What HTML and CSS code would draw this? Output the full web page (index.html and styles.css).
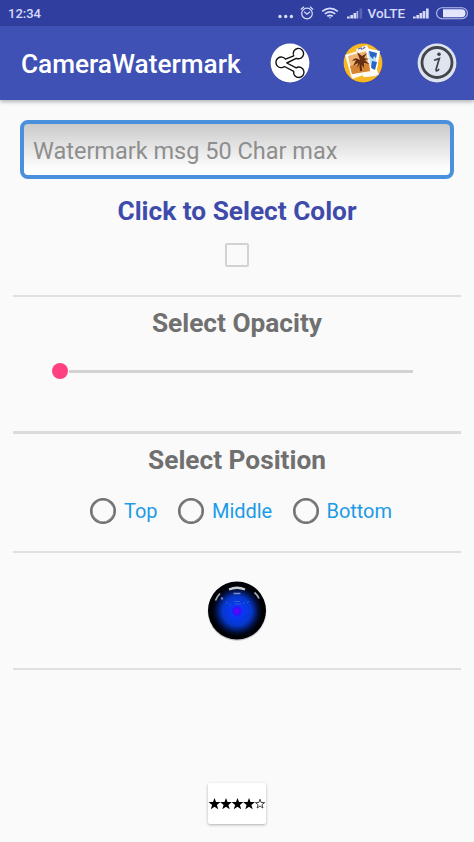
FILE: index.html
```html
<!DOCTYPE html>
<html lang="en">
<head>
<meta charset="utf-8">
<title>CameraWatermark</title>
<link rel="stylesheet" href="styles.css">
</head>
<body>
<div class="status">
  <span class="clock">12:34</span>
  <svg class="dots" width="16" height="26" viewBox="0 0 16 26"><g fill="#d5dafa"><circle cx="2" cy="16.5" r="1.7"/><circle cx="7.7" cy="16.5" r="1.7"/><circle cx="13.4" cy="16.5" r="1.7"/></g></svg>
  <svg class="alarm" width="14" height="26" viewBox="0 0 14 26" fill="none" stroke="#d5dafa" stroke-width="1.2"><circle cx="7" cy="13.5" r="5.3"/><path d="M.8 9.5 4 6.8M13.2 9.5 10 6.8M4.2 11.8 7 14.2l3-2.4"/></svg>
  <svg class="wifi" width="18" height="26" viewBox="0 0 18 26" fill="none" stroke="#d5dafa" stroke-width="1.7"><path d="M1.200 11.300q7.800-6 15.600 0M3.800 13.900q5.200-4 10.400 0M6.300 16.300q2.700-2 5.400 0"/><circle cx="9" cy="17.800" r=".8" fill="#d5dafa" stroke="none"/></svg>
  <svg class="signal" width="16" height="26" viewBox="0 0 16 26" fill="#d5dafa"><path d="M0 16.500h2.700v2H0zM3.300 15H6v3.500H3.300zM6.500 13h2.700v5.500H6.500z"/><path opacity=".75" d="M9.500 11h1.700v7.500H9.500z"/><path opacity=".25" d="M12.500 8.500h2.700v10h-2.700z"/></svg>
  <span class="volte">VoLTE</span>
  <svg class="signal2" width="16" height="26" viewBox="0 0 16 26" fill="#d5dafa"><path d="M0 16.500h2.700v2H0zM3.300 15H6v3.500H3.300zM6.500 13h2.700v5.500H6.500zM9.700 11h2.700v7.500H9.700zM13 8.500h2.700v10H13z"/></svg>
  <svg class="battery" width="32" height="26" viewBox="0 0 32 26"><rect x=".6" y="7.800" width="30.800" height="11" rx="5.500" fill="none" stroke="#b9c1ef" stroke-width="1.100"/><path fill="#e3e6fb" d="M7 9.300h18.500a4 4 0 0 1 0 8H7z"/></svg>
</div>
<header class="appbar">
  <h1>CameraWatermark</h1>
  <svg class="action" viewBox="0 0 40 40"><circle cx="20" cy="20.800" r="19.300" fill="#2c3a8c" opacity=".5"/><circle cx="20" cy="20" r="19.400" fill="#fff"/>
    <g fill="none" stroke="#111" stroke-width="1.400" stroke-linejoin="round"><path d="M15.500 16.200 23.700 12.800A5.200 5.200 0 1 1 26.200 15.300L16.800 20 26.200 24.800A5.200 5.200 0 1 1 23.700 28.300L14.500 23.500A5.300 5.300 0 1 1 15.500 16.200Z"/></g></svg>
  <svg class="action" viewBox="0 0 40 40"><circle cx="20" cy="20.800" r="19.300" fill="#2c3a8c" opacity=".5"/><circle cx="20" cy="20" r="19.400" fill="#f8b824"/>
    <path d="m13 6 11-4 12 30-15 2z" fill="#f7f3ed"/><path d="m15 6 3-1 1 2 3-3" stroke="#6268a8" fill="none" stroke-width="1.300"/>
    <path d="m23 5 14 3-4 25-13 1z" fill="#fff"/><path d="m25 8 9 2-2 14-8-1z" fill="#bfe1f8"/><path d="m26 8 8 2-1 5-2-2-1 3-3-3zM29 18l5 1-2 8-4-2z" fill="#2864c5"/>
    <path d="m2 12 22-7 5 24-20 7z" fill="#fffaf1"/><path d="m5 13 18-5 4 20-18 3z" fill="#f0b573"/><path d="m7 23 19-3 1 8-18 3z" fill="#d78334"/>
    <path d="m16 17 1 11h2l-1-11z" fill="#56290f"/><path d="M17 17q-5-4-8 1l4-1-3 6 5-3-1 5 3-5 4 5v-5l5 1-4-4 4-1-5-1 3-5-5 3-5-4z" fill="#672e12"/></svg>
  <svg class="action" viewBox="0 0 40 40"><circle cx="20" cy="20.800" r="19.300" fill="#2c3a8c" opacity=".5"/><circle cx="20" cy="20" r="19.400" fill="#dce3ee"/><circle cx="20" cy="19.500" r="15" fill="#dfe5ef" stroke="#42464b" stroke-width="2.800"/>
    <circle cx="22" cy="11.300" r="1.800" fill="#3e4247"/><path d="M17 17.200q3-.8 5.300-1.700L19.200 26q-.6 2.500.9 1.800 1-.5 2-1.800" fill="none" stroke="#3e4247" stroke-width="1.700"/></svg>
</header>
<main>
  <input class="message" type="text" placeholder="Watermark msg 50 Char max">
  <section class="color"><h2>Click to Select Color</h2><span class="swatch"></span></section>
  <section class="opacity"><h2>Select Opacity</h2><div class="slider"><span class="thumb"></span><span class="track"></span></div></section>
  <section class="position"><h2>Select Position</h2>
    <div class="radios"><label class="top"><i></i><span>Top</span></label><label class="middle"><i></i><span>Middle</span></label><label class="bottom"><i></i><span>Bottom</span></label></div>
  </section>
  <section class="camera">
    <svg width="60" height="62" viewBox="0 0 60 62"><defs><radialGradient id="lens" cx="50%" cy="51%" r="50%"><stop offset="0" stop-color="#7a00ff"/><stop offset=".1" stop-color="#3c0cf8"/><stop offset=".22" stop-color="#0838f5"/><stop offset=".5" stop-color="#0638cc"/><stop offset=".74" stop-color="#020d38"/><stop offset=".86" stop-color="#000106"/></radialGradient></defs>
      <circle cx="30" cy="31.500" r="29.300" fill="#999" opacity=".5"/><circle cx="30" cy="30.500" r="29" fill="url(#lens)"/>
      <path d="M22 9.500q8-3.500 16 0" stroke="#c8cdd1" stroke-width="2.400" fill="none"/><path d="M8.500 20.500q1.500-4 4.500-7M47.500 12.500q3 2.500 4.500 6" stroke="#a4adb5" stroke-width="1.700" fill="none"/><path d="M26.500 13.500h7" stroke="#7894c6" stroke-width="1.500"/><circle cx="15" cy="18.500" r="1.200" fill="#7085b2"/><path d="M20 22v1.500M23 24v1.500M27 21.500h6M28 24h6M37 22v2M40 23l2-2" stroke="#2d60c9" fill="none"/></svg>
  </section>
  <div class="rating"><svg width="58" height="12" viewBox="0 0 58 12"><defs><path id="star" d="m6 0 1.500 4.100h4.400L8.400 6.900 9.700 11.300 6 8.800l-3.700 2.500 1.300-4.400L.1 4.100h4.400z"/></defs><use href="#star" x=".5"/><use href="#star" x="12"/><use href="#star" x="23.500"/><use href="#star" x="35"/><path transform="translate(47 .8) scale(.84)" d="m6 .5 1.400 3.900 4.100.1-3.200 2.500L9.500 11 6 8.600 2.500 11l1.200-4L.5 4.500l4.100-.1z" fill="none" stroke="#222" stroke-width="1"/></svg></div>
</main>
</body>
</html>
```

FILE: styles.css
```css
* { box-sizing: border-box; }
body { margin: 0; width: 474px; height: 842px; overflow: hidden; background: #fafafa; font-family: Roboto, sans-serif; }
h1, h2 { margin: 0; }
svg { display: block; flex: none; }
.status { height: 26px; background: #303f9f; display: flex; color: #d5dafa; padding-left: 8px; line-height: 27px; font-weight: 500; }
.clock { width: 269.500px; flex: none; font-size: 13px; }
.alarm { margin-left: 6px; }
.wifi { margin-left: 7.500px; }
.signal { margin-left: 7.500px; }
.volte { width: 38px; flex: none; margin-left: 5px; font-size: 13.500px; white-space: nowrap; }
.signal2 { margin-left: 7.500px; }
.battery { margin-left: 7px; }
.appbar { height: 74px; background: #3f51b5; box-shadow: 0 2px 4px rgba(0,0,0,.28); display: flex; align-items: center; padding-left: 21px; position: relative; }
.appbar h1 { width: 248.500px; flex: none; color: #fff; font-size: 26.200px; font-weight: 500; white-space: nowrap; line-height: 74px; padding-top: 2px; }
.action { width: 40px; height: 40px; margin-right: 33.700px; }
main { padding: 20px 13px 0; display: flex; flex-direction: column; }
.message { height: 59px; margin: 0 7px; border: 4px solid #4a90dc; border-radius: 8px; padding: 2px 9px 0; background: linear-gradient(#cacaca, #fff 90%); font: 23.500px Roboto, sans-serif; outline: 0; }
.message::placeholder { color: #8e8e8e; opacity: 1; }
h2 { font-size: 26.250px; line-height: 32px; font-weight: 700; color: #707070; text-align: center; white-space: nowrap; }
section { border-bottom: 2px solid #e0e0e0; display: flex; flex-direction: column; align-items: center; }
.color { height: 118px; padding-top: 16px; }
.color h2 { color: #3f4bab; }
.swatch { width: 24px; height: 24px; margin-top: 16px; border: 2px solid #d2d2d2; border-radius: 2px; }
.opacity { height: 137px; padding-top: 10px; border-bottom-width: 3px; border-bottom-color: #dbdbdb; }
.slider { width: 361px; height: 16px; margin: 24px 9px 0 0; display: flex; align-items: center; gap: 1px; }
.thumb { width: 16px; height: 16px; border-radius: 50%; background: #ff4081; }
.track { flex: 1; height: 3px; background: #d2d2d2; }
.position { height: 119px; padding-top: 10px; }
.radios { width: 448px; margin-top: 21px; padding-left: 77px; display: flex; }
.radios label { display: flex; align-items: center; gap: 8px; height: 27px; color: #1d9be6; font-size: 20px; letter-spacing: -.05px; white-space: nowrap; }
.radios i { width: 26px; height: 26px; border: 2.600px solid #707070; border-width: 2px; box-shadow: inset 0 0 0 .6px #707070; border-radius: 50%; }
.top { width: 88px; }
.middle { width: 114.500px; }
.camera { height: 117px; padding-top: 27px; }
.rating { width: 58px; height: 41px; margin: 113px auto 0; border-radius: 2px; background: #fff; box-shadow: 0 1px 3px rgba(0,0,0,.3); display: flex; align-items: center; }
```
